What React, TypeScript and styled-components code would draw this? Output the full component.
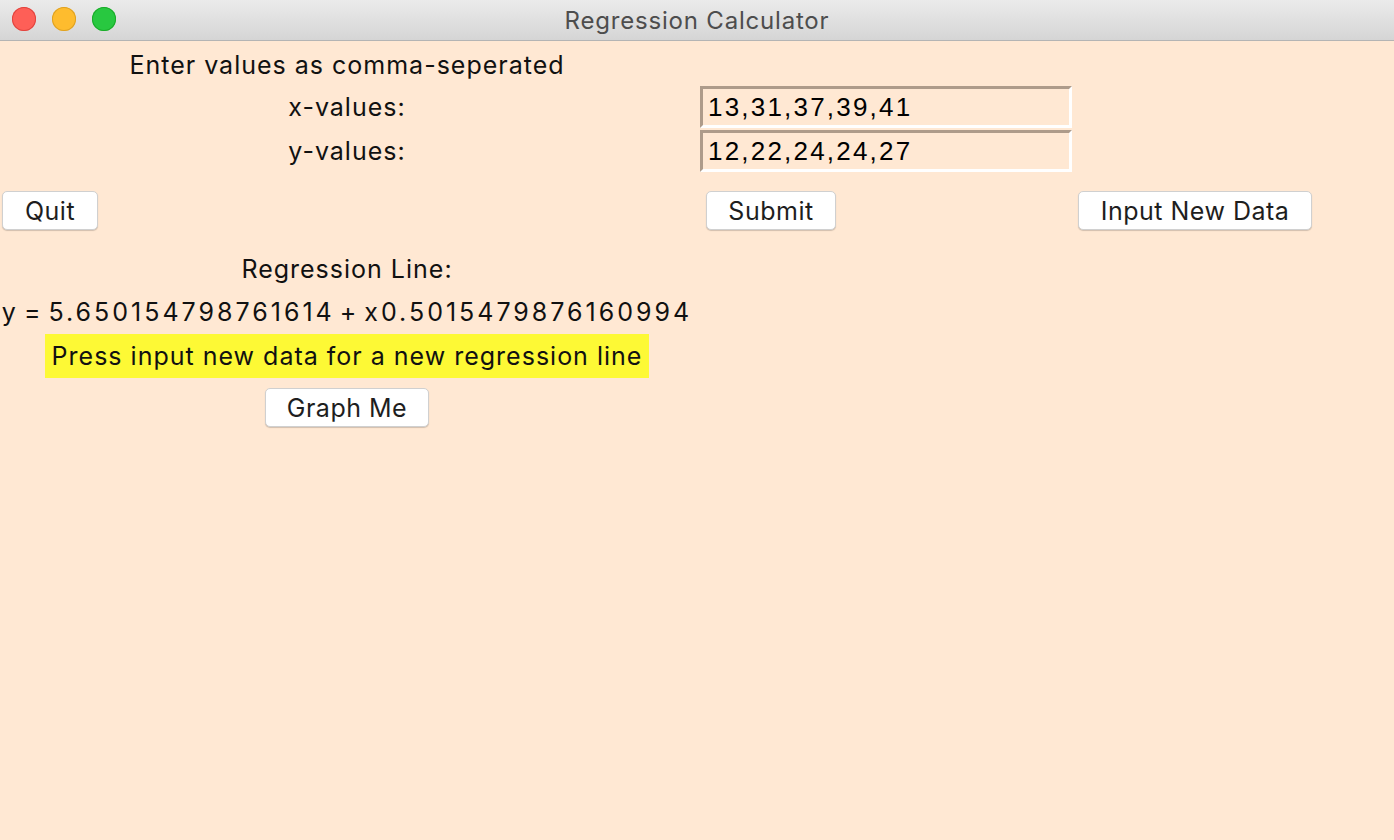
import styled, { createGlobalStyle } from "styled-components";

const Global = createGlobalStyle`
    html, body {
        margin: 0;
        padding: 0;
        background: #ffe8d3;
    }
    body {
        font-family: Inter, "Liberation Sans", sans-serif;
        color: #111;
    }
`

const Window = styled.div`
    width: 1394px;
    height: 840px;
    display: flex;
    flex-direction: column;
    background: #ffe8d3;
    overflow: hidden;
`

const TitleBar = styled.div`
    height: 40px;
    flex-shrink: 0;
    position: relative;
    display: flex;
    align-items: center;
    justify-content: center;
    background: linear-gradient(#ebebeb, #d5d5d5);
    border-bottom: 1px solid #b4b4b4;
`

const Lights = styled.div`
    position: absolute;
    left: 12px;
    top: 7px;
    display: flex;
    gap: 16px;
`

const Light = styled.span<{ $fill: string; $edge: string }>`
    width: 24px;
    height: 24px;
    border-radius: 50%;
    background: ${p => p.$fill};
    box-shadow: inset 0 0 0 1px ${p => p.$edge};
`

const Title = styled.div`
    font-size: 24px;
    color: #4d4d4d;
    letter-spacing: 0.8px;
`

const Grid = styled.div`
    display: grid;
    grid-template-columns: 694px 381px 1fr;
    grid-template-rows: 44px 44px 44px 75px 42px 44px 44px 59px;
    align-items: center;
`

const Label = styled.div<{ $hi?: boolean; $track?: number; $word?: number }>`
    justify-self: center;
    font-size: 25px;
    line-height: 44px;
    letter-spacing: ${p => p.$track ?? 1}px;
    word-spacing: ${p => p.$word ?? 0}px;
    white-space: nowrap;
    padding: 0 7px;
    background: ${p => (p.$hi ? "#fdf935" : "transparent")};
`

const Heading = styled(Label)`
    padding-top: 4px;
`

const Entry = styled.input`
    width: 372px;
    height: 42px;
    box-sizing: border-box;
    margin-left: 6px;
    border-style: solid;
    border-width: 3px;
    border-color: #ae9b8a #fff #fff #ae9b8a;
    background: #ffe8d3;
    font-family: "Liberation Sans", Arial, sans-serif;
    font-size: 26px;
    letter-spacing: 2.2px;
    padding: 1px 0 0 5px;
    color: #000;
    outline: none;
`

const Button = styled.button<{ $w: number; $ml: number }>`
    justify-self: start;
    width: ${p => p.$w}px;
    height: 39px;
    margin-left: ${p => p.$ml}px;
    padding: 0;
    background: #fff;
    border: 1px solid #d0d0d0;
    border-radius: 5px;
    box-shadow: 0 1px 1px rgba(0, 0, 0, 0.18);
    font-family: Inter, "Liberation Sans", sans-serif;
    font-size: 25px;
    letter-spacing: 0.5px;
    color: #1e1e1e;
`

const CenterButton = styled(Button)`
    justify-self: center;
    margin-left: 0;
`

export default function App() {
    return (
        <Window>
            <Global />
            <TitleBar>
                <Lights>
                    <Light $fill="#fe5f57" $edge="#e0443e" />
                    <Light $fill="#febc2e" $edge="#dea123" />
                    <Light $fill="#28c840" $edge="#1aab29" />
                </Lights>
                <Title>Regression Calculator</Title>
            </TitleBar>
            <Grid>
                <Heading>Enter values as comma-seperated</Heading>
                <div />
                <div />

                <Label>x-values:</Label>
                <Entry defaultValue="13,31,37,39,41" />
                <div />

                <Label>y-values:</Label>
                <Entry defaultValue="12,22,24,24,27" />
                <div />

                <Button $w={96} $ml={2}>Quit</Button>
                <Button $w={130} $ml={12}>Submit</Button>
                <Button $w={234} $ml={3}>Input New Data</Button>

                <Label>Regression Line:</Label>
                <div />
                <div />

                <Label $track={3} $word={-5}>y = 5.650154798761614 + x0.5015479876160994</Label>
                <div />
                <div />

                <Label $hi>Press input new data for a new regression line</Label>
                <div />
                <div />

                <CenterButton $w={164} $ml={0}>Graph Me</CenterButton>
                <div />
                <div />
            </Grid>
        </Window>
    );
}
